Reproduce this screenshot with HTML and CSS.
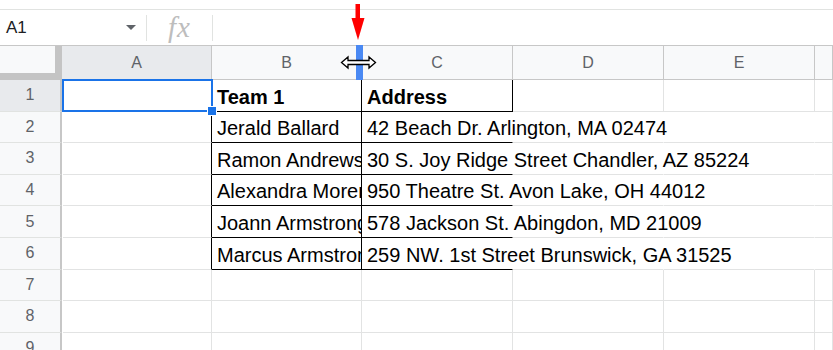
FILE: index.html
```html
<!DOCTYPE html>
<html lang="en-us">
  <head>
    <meta charset="utf-8" />
    <title>Sheet - column resize</title>
    <link rel="stylesheet" href="styles.css">
  </head>
  <body>
    <div class="topline"></div>
    <div class="formula-bar">
      <div class="name-box">
        <span class="ref">A1</span>
        <span class="caret"></span>
      </div>
      <div class="fx">fx</div>
      <div class="formula-input"></div>
    </div>

    <div class="grid">
      <div class="row head">
        <div class="corner"></div>
        <div class="ch col-a sel">A</div>
        <div class="ch col-b">B</div>
        <div class="ch col-c">C</div>
        <div class="ch col-d">D</div>
        <div class="ch col-e">E</div>
        <div class="ch col-f"></div>
      </div>

      <div class="row">
        <div class="rh sel">1</div>
        <div class="cell col-a edge"></div>
        <div class="cell col-b boxed txt bold">Team 1</div>
        <div class="cell col-c boxed closed txt bold">Address</div>
        <div class="cell col-d"></div>
        <div class="cell col-e"></div>
        <div class="cell col-f"></div>
      </div>
      <div class="row">
        <div class="rh">2</div>
        <div class="cell col-a edge"></div>
        <div class="cell col-b boxed txt">Jerald Ballard</div>
        <div class="cell col-c boxed spill txt">42 Beach Dr. Arlington, MA 02474</div>
        <div class="cell col-d hidden"></div>
        <div class="cell col-e hidden"></div>
        <div class="cell col-f"></div>
      </div>
      <div class="row">
        <div class="rh">3</div>
        <div class="cell col-a edge"></div>
        <div class="cell col-b boxed txt">Ramon Andrews</div>
        <div class="cell col-c boxed spill txt">30 S. Joy Ridge Street Chandler, AZ 85224</div>
        <div class="cell col-d hidden"></div>
        <div class="cell col-e hidden"></div>
        <div class="cell col-f"></div>
      </div>
      <div class="row">
        <div class="rh">4</div>
        <div class="cell col-a edge"></div>
        <div class="cell col-b boxed txt">Alexandra Moreno</div>
        <div class="cell col-c boxed spill txt">950 Theatre St. Avon Lake, OH 44012</div>
        <div class="cell col-d hidden"></div>
        <div class="cell col-e hidden"></div>
        <div class="cell col-f"></div>
      </div>
      <div class="row">
        <div class="rh">5</div>
        <div class="cell col-a edge"></div>
        <div class="cell col-b boxed txt">Joann Armstrong</div>
        <div class="cell col-c boxed spill txt">578 Jackson St. Abingdon, MD 21009</div>
        <div class="cell col-d hidden"></div>
        <div class="cell col-e hidden"></div>
        <div class="cell col-f"></div>
      </div>
      <div class="row">
        <div class="rh">6</div>
        <div class="cell col-a edge"></div>
        <div class="cell col-b boxed txt">Marcus Armstrong</div>
        <div class="cell col-c boxed spill txt">259 NW. 1st Street Brunswick, GA 31525</div>
        <div class="cell col-d hidden"></div>
        <div class="cell col-e hidden"></div>
        <div class="cell col-f"></div>
      </div>
      <div class="row">
        <div class="rh">7</div>
        <div class="cell col-a"></div>
        <div class="cell col-b"></div>
        <div class="cell col-c"></div>
        <div class="cell col-d"></div>
        <div class="cell col-e"></div>
        <div class="cell col-f"></div>
      </div>
      <div class="row">
        <div class="rh">8</div>
        <div class="cell col-a"></div>
        <div class="cell col-b"></div>
        <div class="cell col-c"></div>
        <div class="cell col-d"></div>
        <div class="cell col-e"></div>
        <div class="cell col-f"></div>
      </div>
      <div class="row">
        <div class="rh">9</div>
        <div class="cell col-a"></div>
        <div class="cell col-b"></div>
        <div class="cell col-c"></div>
        <div class="cell col-d"></div>
        <div class="cell col-e"></div>
        <div class="cell col-f"></div>
      </div>

      <!-- overlays: active cell, resize handle, cursor -->
      <div class="selection"><span class="handle"></span></div>
      <div class="resize-bar"></div>
      <svg class="cursor" width="38" height="16" viewBox="0 0 38 16">
        <path d="M1.5 7.5 L8 2 L8 5.5 L29 5.5 L29 2 L35.5 7.5 L29 13 L29 9.5 L8 9.5 L8 13 Z"
              fill="#fff" stroke="#000" stroke-width="1.3" stroke-linejoin="miter" />
      </svg>
    </div>

    <svg class="pointer" width="18" height="44" viewBox="0 0 18 44">
      <rect x="5.5" y="4" width="4.5" height="16" fill="#f00" />
      <polygon points="1.5,18 14.5,18 8,40" fill="#f00" />
    </svg>
  </body>
</html>
```

FILE: styles.css
```css
body {
  font-family: "Liberation Sans", Arial, sans-serif;
  margin: 0;
  width: 833px;
  height: 350px;
  overflow: hidden;
  background: #fff;
  position: relative;
}

.topline {
  margin-top: 9px;
  height: 1px;
  background: #e1e3e1;
}

/* formula bar */
.formula-bar {
  display: flex;
  height: 35px;
  align-items: center;
}
.name-box {
  width: 147px;
  height: 26px;
  display: flex;
  align-items: center;
  border-right: 1px solid #e1e3e1;
  box-sizing: border-box;
  padding-left: 6px;
}
.name-box .ref {
  font-size: 17px;
  color: #202124;
  flex: 1;
}
.caret {
  width: 0;
  height: 0;
  border-left: 5px solid transparent;
  border-right: 5px solid transparent;
  border-top: 5px solid #5f6368;
  margin-right: 10px;
}
.fx {
  width: 65px;
  height: 26px;
  border-right: 1px solid #e1e3e1;
  font-family: "Liberation Serif", "Times New Roman", serif;
  font-style: italic;
  font-size: 29px;
  line-height: 24px;
  color: #bdbdbd;
  text-align: center;
  letter-spacing: 1px;
}
.formula-input {
  flex: 1;
}

/* grid */
.grid {
  position: relative;
}
.row {
  display: flex;
  height: 31.6px;
}
.row.head {
  height: 35px;
  border-top: 1px solid #c7c7c7;
  box-sizing: border-box;
}

.col-a { width: 150px; }
.col-b { width: 150px; }
.col-c { width: 151px; }
.col-d { width: 151px; }
.col-e { width: 151px; }
.col-f { flex: 1; }

.corner {
  width: 62px;
  box-sizing: border-box;
  background: #f8f9fa;
  border-right: 7px solid #c4c4c4;
  border-bottom: 7px solid #c4c4c4;
}
.ch {
  box-sizing: border-box;
  background: #f8f9fa;
  border-right: 1px solid #c7c7c7;
  border-bottom: 1px solid #c7c7c7;
  color: #5f6368;
  font-size: 16px;
  display: flex;
  align-items: center;
  justify-content: center;
}
.ch.sel {
  background: #e8eaed;
}

.rh {
  width: 62px;
  box-sizing: border-box;
  background: #f8f9fa;
  border-right: 2px solid #c7c7c7;
  border-bottom: 1px solid #e1e3e1;
  color: #5f6368;
  font-size: 16px;
  display: flex;
  align-items: center;
  justify-content: center;
}
.rh.sel {
  background: #e8eaed;
}

.cell {
  box-sizing: border-box;
  border-right: 1px solid #e2e3e3;
  border-bottom: 1px solid #e2e3e3;
}
.cell.col-a {
  width: 149px;
  margin-left: 1px;
}
.cell.edge {
  border-right-color: #000;
}
.cell.boxed {
  border-right-color: #000;
  border-bottom-color: #000;
}
.cell.spill {
  border-right-color: transparent;
  overflow: visible;
}
.cell.closed {
  border-right-color: #000;
}
.cell.hidden {
  border-right-color: transparent;
}

.txt {
  font-size: 20px;
  color: #000;
  padding: 0 0 2px 5px;
  line-height: 23px;
  white-space: nowrap;
  overflow: hidden;
  display: flex;
  align-items: flex-end;
}
.bold {
  font-weight: bold;
}

/* active cell A1 */
.selection {
  position: absolute;
  left: 62px;
  top: 34px;
  width: 151px;
  height: 33px;
  box-sizing: border-box;
  border: 2px solid #1a73e8;
}
.handle {
  position: absolute;
  right: -6px;
  bottom: -6px;
  width: 8px;
  height: 8px;
  background: #1a73e8;
  border: 1px solid #fff;
}

/* column resize indicator between B and C */
.resize-bar {
  position: absolute;
  left: 356px;
  top: 0;
  width: 7px;
  height: 35px;
  background: #4a89f3;
}
.cursor {
  position: absolute;
  left: 340px;
  top: 10px;
}
.pointer {
  position: absolute;
  left: 350px;
  top: 0;
}
```
